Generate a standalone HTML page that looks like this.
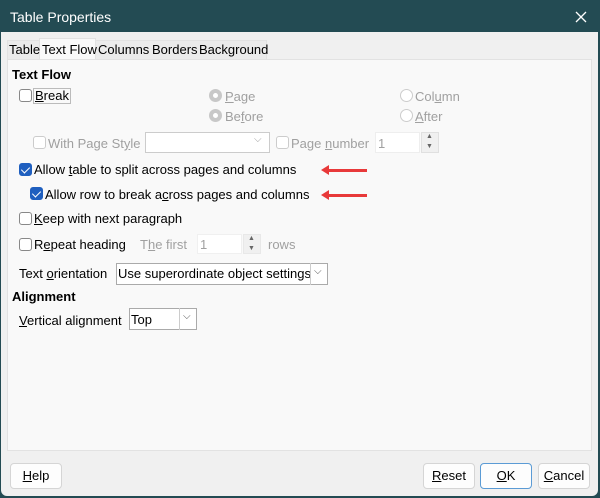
<!DOCTYPE html><html><head><style>
*{margin:0;padding:0;box-sizing:border-box}
body{width:600px;height:498px;background:#234b53;font-family:"Liberation Sans",sans-serif;font-size:13px;color:#000;position:relative;overflow:hidden}
.a{position:absolute;white-space:nowrap}
#win{position:absolute;left:1px;top:32px;width:597px;height:464px;background:#f0f0f0;border-radius:0 0 6px 6px}
.panel{position:absolute;left:7px;top:59px;width:585px;height:392px;background:#f9f9f9;border:1px solid #e2e2e2}
.cb{position:absolute;width:13px;height:13px;border:1px solid #888;border-radius:3px;background:#fff}
.cb.dis{border-color:#ccc}
.cb.on{background:#1f5fbf;border-color:#1f5fbf}
.cb.on:after{content:"";position:absolute;left:3px;top:1px;width:4px;height:7px;border:solid #fff;border-width:0 1.5px 1.5px 0;transform:rotate(45deg)}
.rd{position:absolute;width:13px;height:13px;border-radius:50%;border:1px solid #ccc;background:#fff}
.rd.f{border:4px solid #c8c8c8}
.g{color:#a0a0a0}
u{text-decoration:underline}
.box{position:absolute;background:#fff;border:1px solid #ccc}
.btn{position:absolute;background:#fdfdfd;border:1px solid #d5d5d5;border-radius:4px;text-align:center;line-height:24px;font-size:13px}
.arr{position:absolute;height:3px;background:#e8393a}
.arr:before{content:"";position:absolute;left:-6px;top:-4px;border-right:8px solid #e8393a;border-top:5.5px solid transparent;border-bottom:5.5px solid transparent}
</style></head><body>
<div class="a" style="left:10px;top:9px;color:#fff;font-size:14px">Table Properties</div>
<svg class="a" style="left:575px;top:11px" width="12" height="12"><path d="M1 1L11 11M11 1L1 11" stroke="#fff" stroke-width="1.3"/></svg>
<div id="win"></div>
<div class="a" style="left:7px;top:40px;width:260px;height:20px;background:#ebebeb;border:1px solid #e2e2e2"></div>
<div class="a" style="left:39px;top:38px;width:57px;height:22px;background:#f9f9f9;border:1px solid #e2e2e2;border-bottom:none"></div>
<div class="a" style="left:9px;top:42px">Table</div>
<div class="a" style="left:42px;top:42px">Text Flow</div>
<div class="a" style="left:98px;top:42px">Columns</div>
<div class="a" style="left:152px;top:42px">Borders</div>
<div class="a" style="left:199px;top:42px">Background</div>
<div class="panel"></div>
<div class="a" style="left:12px;top:67px;font-weight:bold">Text Flow</div>
<div class="cb" style="left:19px;top:89px"></div>
<div class="a" style="left:33px;top:88px;border:1px solid #bbb;padding:0 1px;line-height:14px"><u>B</u>reak</div>
<div class="rd f" style="left:209px;top:89px"></div><div class="a g" style="left:225px;top:89px"><u>P</u>age</div>
<div class="rd f" style="left:209px;top:109px"></div><div class="a g" style="left:225px;top:109px">Be<u>f</u>ore</div>
<div class="rd" style="left:400px;top:89px"></div><div class="a g" style="left:415px;top:89px">Col<u>u</u>mn</div>
<div class="rd" style="left:400px;top:109px"></div><div class="a g" style="left:415px;top:109px"><u>A</u>fter</div>
<div class="cb dis" style="left:33px;top:136px"></div><div class="a g" style="left:48px;top:136px">With Page St<u>y</u>le</div>
<div class="box" style="left:145px;top:132px;width:125px;height:21px;border-color:#ccc"></div>
<div class="a g" style="left:254px;top:134px;font-size:10px">⌵</div>
<div class="cb dis" style="left:276px;top:136px"></div><div class="a g" style="left:291px;top:136px">Page <u>n</u>umber</div>
<div class="box" style="left:375px;top:132px;width:45px;height:21px;border-color:#eee"></div>
<div class="a g" style="left:378px;top:136px">1</div>
<div class="box" style="left:421px;top:132px;width:18px;height:21px;background:#f0f0f0;border-color:#e0e0e0"></div>
<div class="a" style="left:426px;top:132px;font-size:7px;color:#666;line-height:10px">▲<br>▼</div>
<div class="cb on" style="left:19px;top:163px"></div><div class="a" style="left:34px;top:162px">Allow <u>t</u>able to split across pages and columns</div>
<div class="arr" style="left:327px;top:169px;width:40px"></div>
<div class="cb on" style="left:30px;top:187px"></div><div class="a" style="left:45px;top:187px">Allow row to break a<u>c</u>ross pages and columns</div>
<div class="arr" style="left:327px;top:194px;width:40px"></div>
<div class="cb" style="left:19px;top:212px"></div><div class="a" style="left:34px;top:211px"><u>K</u>eep with next paragraph</div>
<div class="cb" style="left:19px;top:238px"></div><div class="a" style="left:34px;top:237px">R<u>e</u>peat heading</div>
<div class="a g" style="left:140px;top:237px">T<u>h</u>e first</div>
<div class="box" style="left:197px;top:234px;width:45px;height:20px;border-color:#f0f0f0"></div>
<div class="a g" style="left:200px;top:237px">1</div>
<div class="box" style="left:243px;top:234px;width:18px;height:20px;background:#f0f0f0;border-color:#e8e8e8"></div>
<div class="a" style="left:248px;top:234px;font-size:7px;color:#666;line-height:10px">▲<br>▼</div>
<div class="a g" style="left:268px;top:237px">rows</div>
<div class="a" style="left:19px;top:266px">Text <u>o</u>rientation</div>
<div class="box" style="left:116px;top:263px;width:212px;height:22px;border-color:#aaa"></div>
<div class="a" style="left:118px;top:266px">Use superordinate object settings</div>
<div class="a" style="left:310px;top:263px;width:1px;height:22px;background:#ccc"></div>
<div class="a" style="left:314px;top:266px;font-size:10px;color:#555">⌵</div>
<div class="a" style="left:12px;top:289px;font-weight:bold">Alignment</div>
<div class="a" style="left:19px;top:313px"><u>V</u>ertical alignment</div>
<div class="box" style="left:129px;top:308px;width:68px;height:22px;border-color:#aaa"></div>
<div class="a" style="left:131px;top:312px">Top</div>
<div class="a" style="left:179px;top:308px;width:1px;height:22px;background:#ccc"></div>
<div class="a" style="left:183px;top:311px;font-size:10px;color:#555">⌵</div>
<div class="btn" style="left:10px;top:463px;width:52px;height:26px"><u>H</u>elp</div>
<div class="btn" style="left:423px;top:463px;width:52px;height:26px"><u>R</u>eset</div>
<div class="btn" style="left:480px;top:463px;width:52px;height:26px;border-color:#5b9bd5"><u>O</u>K</div>
<div class="btn" style="left:538px;top:463px;width:52px;height:26px"><u>C</u>ancel</div>
</body></html>
